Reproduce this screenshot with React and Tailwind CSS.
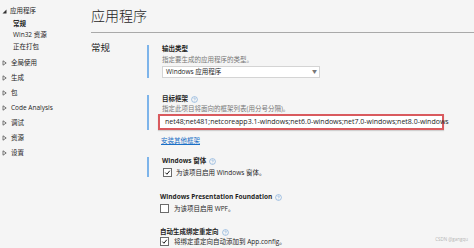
import React from "react";

const font = "font-['Open_Sans','Noto_Sans_CJK_SC',sans-serif]";

function Expanded() {
  return (
    <svg width="5" height="5" viewBox="0 0 5 5" className="shrink-0">
      <path d="M4.5 0.5 L4.5 4.5 L0.5 4.5 Z" fill="#333" />
    </svg>
  );
}

function Collapsed() {
  return (
    <svg width="5" height="6" viewBox="0 0 5 6" className="shrink-0">
      <path d="M1 0.8 L4.2 3 L1 5.2 Z" fill="none" stroke="#555" strokeWidth="0.8" />
    </svg>
  );
}

function Help() {
  return (
    <svg width="7" height="7" viewBox="0 0 24 24" className="ml-[3px] shrink-0">
      <circle cx="12" cy="12" r="10" fill="none" stroke="#6a9fd6" strokeWidth="2" />
      <path d="M9.1 9a3 3 0 0 1 5.8 1c0 2-3 2.5-3 4" fill="none" stroke="#6a9fd6" strokeWidth="2" />
      <circle cx="12" cy="17.5" r="1.2" fill="#6a9fd6" />
    </svg>
  );
}

function Checkbox({ checked }) {
  return (
    <span className="w-[9px] h-[9px] bg-white border border-[#6b6b6b] flex items-center justify-center shrink-0">
      {checked && (
        <svg width="7" height="7" viewBox="0 0 10 10">
          <path d="M2 5.2 L4.2 7.5 L8.2 2.5" fill="none" stroke="#111" strokeWidth="1.4" />
        </svg>
      )}
    </span>
  );
}

const topItems = ["全局使用", "生成", "包", "Code Analysis", "调试", "资源", "设置"];

export default function App() {
  return (
    <div className={`w-[474px] h-[248px] bg-[#f5f5f5] flex overflow-hidden relative text-[#1e1e1e] ${font}`}>
      {/* Sidebar */}
      <nav className="w-[91px] shrink-0 pt-[4px] text-[6.5px]">
        <div className="h-[14px] flex items-center gap-[3px] pl-[2px]">
          <Expanded />
          <span>应用程序</span>
        </div>
        <div className="h-[11.5px] flex items-center pl-[13px] font-bold">常规</div>
        <div className="h-[11.5px] flex items-center pl-[13px]">Win32 资源</div>
        <div className="h-[11.5px] flex items-center pl-[13px]">正在打包</div>
        <div className="mt-[3px]">
          {topItems.map((t) => (
            <div key={t} className="h-[15px] flex items-center gap-[4px] pl-[2px]">
              <Collapsed />
              <span>{t}</span>
            </div>
          ))}
        </div>
      </nav>

      {/* Main */}
      <main className="flex-1 flex flex-col">
        <div className="h-[33px] border-b border-[#a9a9a9] pt-[6px]">
          <h1 className="text-[14px] leading-[20px] font-light">应用程序</h1>
        </div>

        <div className="flex">
          <div className="w-[56px] shrink-0 pt-[9px] text-[9.5px] leading-[12px]">常规</div>

          <div className="flex-1 pt-[12px] flex flex-col text-[6.5px]">
            {/* 输出类型 */}
            <div className="border-l-2 border-[#7db4ea] pl-[13px]">
              <div className="h-[8px] leading-[8px] font-bold">输出类型</div>
              <div className="mt-[3px] h-[8px] leading-[8px] text-[#777]">指定要生成的应用程序的类型。</div>
              <div className="mt-[2px] h-[12px] w-[158px] bg-white border border-[#d4d4d4] flex items-center justify-between pl-[3px] pr-[2px]">
                <span>Windows 应用程序</span>
                <span className="text-[5px] text-[#777]">▼</span>
              </div>
            </div>

            {/* 目标框架 */}
            <div className="mt-[17px] border-l-2 border-[#7db4ea] pl-[13px]">
              <div className="h-[8px] leading-[8px] font-bold flex items-center">
                目标框架
                <Help />
              </div>
              <div className="mt-[2px] h-[8px] leading-[8px] text-[#777]">指定此项目将面向的框架列表(用分号分隔)。</div>
              <div className="mt-[1px] -ml-[4px] h-[16px] w-[286px] bg-white border-2 border-[#d95a5e] shadow-[0_1px_1px_rgba(0,0,0,0.15)] flex items-center pl-[5px] text-[7px] whitespace-nowrap">
                net48;net481;netcoreapp3.1-windows;net6.0-windows;net7.0-windows;net8.0-windows
              </div>
            </div>

            <div className="mt-[7px] h-[8px] leading-[8px] pl-[14px]">
              <span className="text-[#1a6fc6] underline">安装其他框架</span>
            </div>

            {/* Windows 窗体 */}
            <div className="mt-[12px] border-l-2 border-[#7db4ea] pl-[13px]">
              <div className="h-[8px] leading-[8px] font-bold flex items-center">
                Windows 窗体
                <Help />
              </div>
              <div className="mt-[3px] h-[9px] flex items-center gap-[4px] pl-[1px]">
                <Checkbox checked />
                <span>为该项目启用 Windows 窗体。</span>
              </div>
            </div>

            {/* WPF */}
            <div className="mt-[16px] pl-[13px]">
              <div className="h-[8px] leading-[8px] font-bold flex items-center">
                Windows Presentation Foundation
                <Help />
              </div>
              <div className="mt-[3px] h-[9px] flex items-center gap-[5px]">
                <Checkbox />
                <span>为该项目启用 WPF。</span>
              </div>
            </div>

            {/* 自动生成绑定重定向 */}
            <div className="mt-[15px] pl-[13px]">
              <div className="h-[8px] leading-[8px] font-bold flex items-center">
                自动生成绑定重定向
                <Help />
              </div>
              <div className="mt-[1px] h-[9px] flex items-center gap-[5px]">
                <Checkbox checked />
                <span>将绑定重定向自动添加到 App.config。</span>
              </div>
            </div>
          </div>
        </div>
      </main>

      <div className="absolute right-[6px] bottom-[5px] text-[4.5px] text-[#b5b5b5]">CSDN @gangqu</div>
    </div>
  );
}
